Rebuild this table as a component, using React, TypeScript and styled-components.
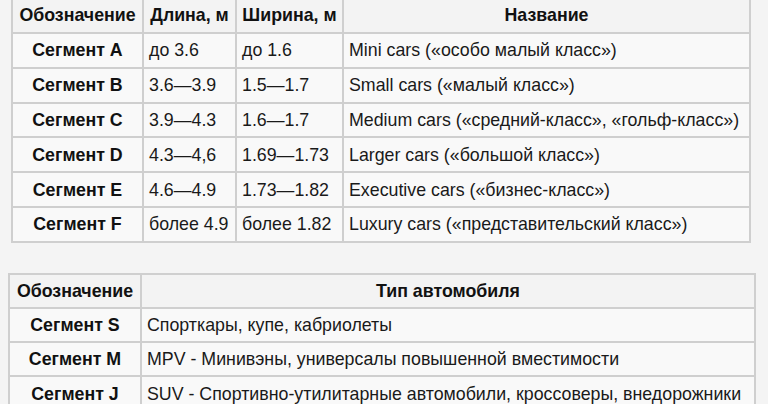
import React from "react";
import styled, { createGlobalStyle } from "styled-components";

const Global = createGlobalStyle`
  html, body { margin: 0; padding: 0; background: #f4f4f4; overflow: hidden; }
  body { font-family: "Liberation Sans", Arial, sans-serif; color: #111; }
`;

const Page = styled.div`
  display: flex;
  flex-direction: column;
  width: 768px;
  height: 404px;
  overflow: hidden;
`;

const Section = styled.section<{ $pt: number; $pl: number; $pb: number }>`
  background: #f4f4f4;
  padding: ${(p) => p.$pt}px 0 ${(p) => p.$pb}px ${(p) => p.$pl}px;
`;

const Band = styled.div`
  height: 13px;
  background: #fbfbfb;
`;

const Table = styled.table<{ $w: number; $mt: number }>`
  border-collapse: collapse;
  table-layout: fixed;
  width: ${(p) => p.$w}px;
  margin-top: ${(p) => p.$mt}px;
  background: #f9f9f9;
  font-size: 17.8px;
`;

const Th = styled.th<{ $pad: number }>`
  border: 2px solid #cfcfcf;
  background: #f3f3f3;
  font-weight: bold;
  text-align: center;
  line-height: 20px;
  padding: ${(p) => p.$pad}px 5px;
  white-space: nowrap;
  color: #111;
`;

const Label = styled.td<{ $pad: number }>`
  border: 2px solid #cfcfcf;
  font-weight: bold;
  text-align: center;
  line-height: 20px;
  padding: ${(p) => p.$pad}px 5px;
  white-space: nowrap;
  color: #111;
`;

const Td = styled.td<{ $pad: number }>`
  border: 2px solid #cfcfcf;
  text-align: left;
  line-height: 20px;
  padding: ${(p) => p.$pad}px 5px;
  white-space: nowrap;
  color: #1a1a1a;
`;

const segments = [
  ["Сегмент A", "до 3.6", "до 1.6", "Mini cars («особо малый класс»)"],
  ["Сегмент B", "3.6—3.9", "1.5—1.7", "Small cars («малый класс»)"],
  ["Сегмент C", "3.9—4.3", "1.6—1.7", "Medium cars («средний-класс», «гольф-класс»)"],
  ["Сегмент D", "4.3—4,6", "1.69—1.73", "Larger cars («большой класс»)"],
  ["Сегмент E", "4.6—4.9", "1.73—1.82", "Executive cars («бизнес-класс»)"],
  ["Сегмент F", "более 4.9", "более 1.82", "Luxury cars («представительский класс»)"],
];

const types = [
  ["Сегмент S", "Спорткары, купе, кабриолеты"],
  ["Сегмент M", "MPV - Минивэны, универсалы повышенной вместимости"],
  ["Сегмент J", "SUV - Спортивно-утилитарные автомобили, кроссоверы, внедорожники"],
];

export default function App() {
  return (
    <Page>
      <Global />
      <Section $pt={0} $pl={11} $pb={9}>
        <Table $w={740} $mt={-4}>
          <colgroup>
            <col style={{ width: 131 }} />
            <col style={{ width: 93 }} />
            <col style={{ width: 107 }} />
            <col />
          </colgroup>
          <thead>
            <tr>
              <Th $pad={7}>Обозначение</Th>
              <Th $pad={7}>Длина, м</Th>
              <Th $pad={7}>Ширина, м</Th>
              <Th $pad={7}>Название</Th>
            </tr>
          </thead>
          <tbody>
            {segments.map((r) => (
              <tr key={r[0]}>
                <Label $pad={6.4}>{r[0]}</Label>
                <Td $pad={6.4}>{r[1]}</Td>
                <Td $pad={6.4}>{r[2]}</Td>
                <Td $pad={6.4}>{r[3]}</Td>
              </tr>
            ))}
          </tbody>
        </Table>
      </Section>
      <Band />
      <Section $pt={21} $pl={8} $pb={0}>
        <Table $w={748} $mt={0}>
          <colgroup>
            <col style={{ width: 132 }} />
            <col />
          </colgroup>
          <thead>
            <tr>
              <Th $pad={6}>Обозначение</Th>
              <Th $pad={6}>Тип автомобиля</Th>
            </tr>
          </thead>
          <tbody>
            {types.map((r) => (
              <tr key={r[0]}>
                <Label $pad={6.2}>{r[0]}</Label>
                <Td $pad={6.2}>{r[1]}</Td>
              </tr>
            ))}
          </tbody>
        </Table>
      </Section>
    </Page>
  );
}
